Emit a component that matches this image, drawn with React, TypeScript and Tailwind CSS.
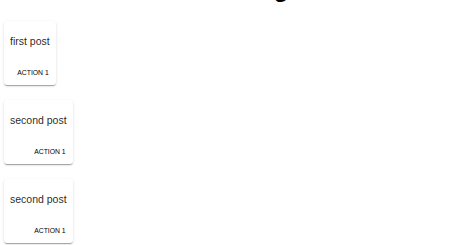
const posts = [
  { id: 1, title: 'first post' },
  { id: 2, title: 'second post' },
  { id: 3, title: 'second post' },
]

function PostCard({ title }: { title: string }) {
  return (
    <div className="flex w-fit flex-col rounded-[3px] bg-white shadow-[0_2px_1px_-1px_rgba(0,0,0,0.2),0_1px_1px_0_rgba(0,0,0,0.14),0_1px_3px_0_rgba(0,0,0,0.12)]">
      <div className="px-[6px] pt-[12px]">
        <p className="text-[10.5px] leading-[16px] text-[rgba(0,0,0,0.87)]">{title}</p>
      </div>
      <div className="flex justify-end px-[7px] pt-[19px] pb-[7px]">
        <button className="text-[6.8px] font-normal uppercase leading-[10px] text-black">
          Action 1
        </button>
      </div>
    </div>
  )
}

export default function App() {
  return (
    <div className="min-h-screen overflow-hidden bg-white font-['Liberation_Sans',Arial,sans-serif]">
      <h1 className="mt-[-25px] text-center text-[24px] font-bold leading-[28px] text-black">The Blog</h1>
      <div className="flex flex-col gap-[15px] px-[4px] pt-[18px]">
        {posts.map((p) => (
          <PostCard key={p.id} title={p.title} />
        ))}
      </div>
    </div>
  )
}
